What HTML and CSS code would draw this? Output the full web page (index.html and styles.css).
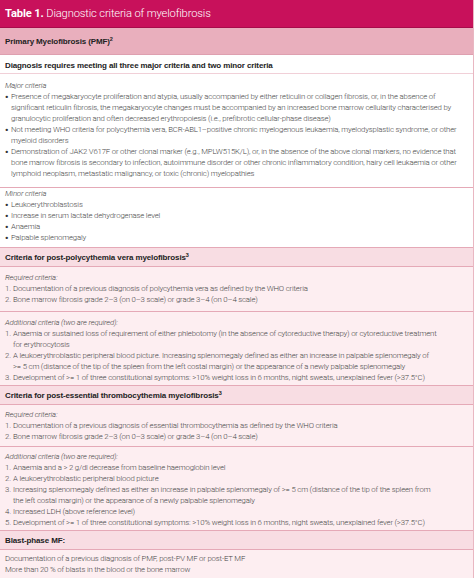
FILE: index.html
```html
<!DOCTYPE html>
<html>
<head>
<meta charset="utf-8">
<link rel="stylesheet" href="styles.css">
</head>
<body>
<div class="table">
  <div class="title"><b>Table 1.</b> Diagnostic criteria of myelofibrosis</div>
  <div class="row pmf">Primary Myelofibrosis (PMF)<sup>2</sup></div>
  <div class="row sub">Diagnosis requires meeting all three major criteria and two minor criteria</div>
  <div class="block major">
    <div class="label">Major criteria</div>
    <ul class="list">
      <li><span class="m">•</span><span class="t">Presence of megakaryocyte proliferation and atypia, usually accompanied by either reticulin or collagen fibrosis, or, in the absence of<br>significant reticulin fibrosis, the megakaryocyte changes must be accompanied by an increased bone marrow cellularity characterised by<br>granulocytic proliferation and often decreased erythropoiesis (i.e., prefibrotic cellular-phase disease)</span></li>
      <li><span class="m">•</span><span class="t">Not meeting WHO criteria for polycythemia vera, BCR-ABL1–positive chronic myelogenous leukaemia, myelodysplastic syndrome, or other<br>myeloid disorders</span></li>
      <li><span class="m">•</span><span class="t">Demonstration of JAK2 V617F or other clonal marker (e.g., MPLW515K/L), or, in the absence of the above clonal markers, no evidence that<br>bone marrow fibrosis is secondary to infection, autoimmune disorder or other chronic inflammatory condition, hairy cell leukaemia or other<br>lymphoid neoplasm, metastatic malignancy, or toxic (chronic) myelopathies</span></li>
    </ul>
  </div>
  <div class="block minor">
    <div class="label">Minor criteria</div>
    <ul class="list">
      <li><span class="m">•</span><span class="t">Leukoerythroblastosis</span></li>
      <li><span class="m">•</span><span class="t">Increase in serum lactate dehydrogenase level</span></li>
      <li><span class="m">•</span><span class="t">Anaemia</span></li>
      <li><span class="m">•</span><span class="t">Palpable splenomegaly</span></li>
    </ul>
  </div>
  <div class="row sec">Criteria for post-polycythemia vera myelofibrosis<sup>3</sup></div>
  <div class="block tint pv-req">
    <div class="label">Required criteria:</div>
    <ol class="list num">
      <li><span class="m">1.</span><span class="t">Documentation of a previous diagnosis of polycythemia vera as defined by the WHO criteria</span></li>
      <li><span class="m">2.</span><span class="t">Bone marrow fibrosis grade 2–3 (on 0–3 scale) or grade 3–4 (on 0–4 scale)</span></li>
    </ol>
  </div>
  <div class="block tint pv-add">
    <div class="label">Additional criteria (two are required):</div>
    <ol class="list num">
      <li><span class="m">1.</span><span class="t">Anaemia or sustained loss of requirement of either phlebotomy (in the absence of cytoreductive therapy) or cytoreductive treatment<br>for erythrocytosis</span></li>
      <li><span class="m">2.</span><span class="t">A leukoerythroblastic peripheral blood picture. Increasing splenomegaly defined as either an increase in palpable splenomegaly of<br>&gt;= 5 cm (distance of the tip of the spleen from the left costal margin) or the appearance of a newly palpable splenomegaly</span></li>
      <li><span class="m">3.</span><span class="t">Development of &gt;= 1 of three constitutional symptoms: &gt;10% weight loss in 6 months, night sweats, unexplained fever (&gt;37.5°C)</span></li>
    </ol>
  </div>
  <div class="row sec">Criteria for post-essential thrombocythemia myelofibrosis<sup>3</sup></div>
  <div class="block tint et-req">
    <div class="label">Required criteria:</div>
    <ol class="list num">
      <li><span class="m">1.</span><span class="t">Documentation of a previous diagnosis of essential thrombocythemia as defined by the WHO criteria</span></li>
      <li><span class="m">2.</span><span class="t">Bone marrow fibrosis grade 2–3 (on 0–3 scale) or grade 3–4 (on 0–4 scale)</span></li>
    </ol>
  </div>
  <div class="block tint et-add">
    <div class="label">Additional criteria (two are required):</div>
    <ol class="list num">
      <li><span class="m">1.</span><span class="t">Anaemia and a &gt; 2 g/dl decrease from baseline haemoglobin level</span></li>
      <li><span class="m">2.</span><span class="t">A leukoerythroblastic peripheral blood picture</span></li>
      <li><span class="m">3.</span><span class="t">Increasing splenomegaly defined as either an increase in palpable splenomegaly of &gt;= 5 cm (distance of the tip of the spleen from<br>the left costal margin) or the appearance of a newly palpable splenomegaly</span></li>
      <li><span class="m">4.</span><span class="t">Increased LDH (above reference level)</span></li>
      <li><span class="m">5.</span><span class="t">Development of &gt;= 1 of three constitutional symptoms: &gt;10% weight loss in 6 months, night sweats, unexplained fever (&gt;37.5°C)</span></li>
    </ol>
  </div>
  <div class="row sec">Blast-phase MF:</div>
  <div class="block tint last">
    <div class="plain">Documentation of a previous diagnosis of PMF, post-PV MF or post-ET MF</div>
    <div class="plain">More than 20 % of blasts in the blood or the bone marrow</div>
  </div>
</div>
</body>
</html>
```

FILE: styles.css
```css
html, body {
  margin: 0;
  padding: 0;
  background: #ffffff;
}

.table {
  width: 474px;
  box-sizing: border-box;
  border-right: 1px solid #e9b7c2;
  font-family: Roboto, "Liberation Sans", Arial, sans-serif;
  font-weight: 300;
  color: #474747;
  font-size: 7.8px;
  letter-spacing: -0.18px;
  line-height: 11px;
}

.title {
  background: #c8115b;
  color: #ffffff;
  font-family: Roboto, "Liberation Sans", Arial, sans-serif;
  font-weight: 300;
  font-size: 11.2px;
  letter-spacing: -0.15px;
  line-height: 16px;
  height: 28px;
  box-sizing: border-box;
  padding: 6px 5px 0;
  border-bottom: 1px solid #a70c4b;
}

.title b {
  font-weight: bold;
}

.row {
  font-family: "Liberation Sans", Arial, sans-serif;
  font-size: 8px;
  font-weight: bold;
  color: #222222;
  letter-spacing: -0.12px;
  padding: 4px 5px 3px;
  border-bottom: 1px solid #e5a9b7;
}

.row sup {
  font-size: 5.5px;
  line-height: 0;
  vertical-align: 3px;
}

.pmf {
  background: #e9afbd;
  height: 27px;
  box-sizing: border-box;
  padding-top: 8px;
  border-bottom: 1px solid #dea0b0;
}

.sub {
  background: #ffffff;
  border-bottom: 1px solid #f1d0d8;
  padding-top: 5px;
  padding-bottom: 2px;
}

.sec {
  background: #f8dde3;
}

.block {
  padding: 4px 5px 4px 5px;
  border-bottom: 1px solid #e5a9b7;
}

.major {
  padding-top: 6px;
  padding-bottom: 8px;
}

.minor {
  padding-top: 0;
  padding-bottom: 4px;
}

.tint {
  background: #fdeef1;
}

.pv-req {
  padding-top: 5px;
  padding-bottom: 6px;
}

.pv-add {
  padding-top: 5px;
  padding-bottom: 2px;
}

.et-add {
  padding-bottom: 2px;
}

.last {
  padding-top: 3px;
  padding-bottom: 3px;
  border-bottom: none;
}

.label {
  font-style: italic;
}

.list {
  list-style: none;
  margin: 0;
  padding: 0;
}

.list li {
  display: flex;
}

.list .m {
  flex: none;
  width: 6px;
  line-height: 11px;
}

.list:not(.num) .m {
  font-size: 9.5px;
  font-weight: 700;
  color: #333333;
}

.list.num .m {
  width: 8px;
}

.list .t {
  flex: 1;
  min-width: 0;
}
```
